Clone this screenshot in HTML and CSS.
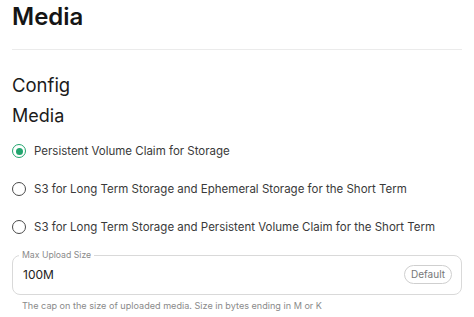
FILE: index.html
```
<!DOCTYPE html>
<html>
<head>
<meta charset="utf-8">
<link rel="stylesheet" href="styles.css">
</head>
<body>
<div class="page">
  <h1 class="title">Media</h1>
  <div class="divider"></div>
  <h2 class="section">Config</h2>
  <h3 class="subsection">Media</h3>
  <div class="radios">
    <label class="radio checked"><span class="dot"></span><span class="label">Persistent Volume Claim for Storage</span></label>
    <label class="radio"><span class="dot"></span><span class="label">S3 for Long Term Storage and Ephemeral Storage for the Short Term</span></label>
    <label class="radio"><span class="dot"></span><span class="label">S3 for Long Term Storage and Persistent Volume Claim for the Short Term</span></label>
  </div>
  <fieldset class="field">
    <legend class="legend">Max Upload Size</legend>
    <div class="field-row">
      <span class="value">100M</span>
      <span class="chip">Default</span>
    </div>
  </fieldset>
  <div class="helper">The cap on the size of uploaded media. Size in bytes ending in M or K</div>
</div>
</body>
</html>
```
FILE: styles.css
```
html, body {
  margin: 0;
  padding: 0;
  background: #ffffff;
}
body {
  font-family: Inter, "Noto Sans", "Liberation Sans", sans-serif;
  color: #1b1b1b;
}
.page {
  padding: 0 12px;
  width: 450px;
}
.title {
  margin: 0;
  padding-top: 2px;
  font-size: 24px;
  line-height: 30px;
  font-weight: 600;
  color: #151515;
}
.divider {
  margin-top: 17px;
  height: 1px;
  background: #ebebeb;
}
.section {
  margin: 24px 0 0;
  font-size: 18.5px;
  line-height: 22px;
  font-weight: 400;
}
.subsection {
  margin: 9px 0 0;
  font-size: 18px;
  line-height: 22px;
  font-weight: 400;
}
.radios {
  display: flex;
  flex-direction: column;
  gap: 16px;
  margin-top: 13px;
}
.radio {
  display: flex;
  align-items: center;
  height: 22px;
  gap: 8px;
  font-size: 11.5px;
  color: #3a3a3a;
}
.dot {
  box-sizing: border-box;
  width: 14px;
  height: 14px;
  border-radius: 50%;
  border: 1.6px solid #4a4a4a;
  display: flex;
  align-items: center;
  justify-content: center;
}
.radio.checked .dot {
  border-color: #22a56e;
}
.radio.checked .dot::after {
  content: "";
  width: 7px;
  height: 7px;
  border-radius: 50%;
  background: #22a56e;
}
.field {
  margin: 12px 0 0;
  padding: 0 10px 9px;
  border: 1px solid #d9d9d9;
  border-radius: 8px;
  min-width: 0;
}
.legend {
  padding: 0 3px;
  margin-left: -4px;
  font-size: 8.7px;
  color: #8a8a8a;
  line-height: 10px;
}
.field-row {
  display: flex;
  align-items: center;
  justify-content: space-between;
  height: 22px;
  margin-top: 3px;
}
.value {
  font-size: 12px;
  color: #222;
}
.chip {
  font-size: 10px;
  color: #777;
  border: 1px solid #cfcfcf;
  border-radius: 10px;
  padding: 2px 6px;
  line-height: 13px;
  margin-right: -1px;
}
.helper {
  margin: 5px 0 0 10px;
  font-size: 9.1px;
  line-height: 11px;
  color: #8a8a8a;
}
```
